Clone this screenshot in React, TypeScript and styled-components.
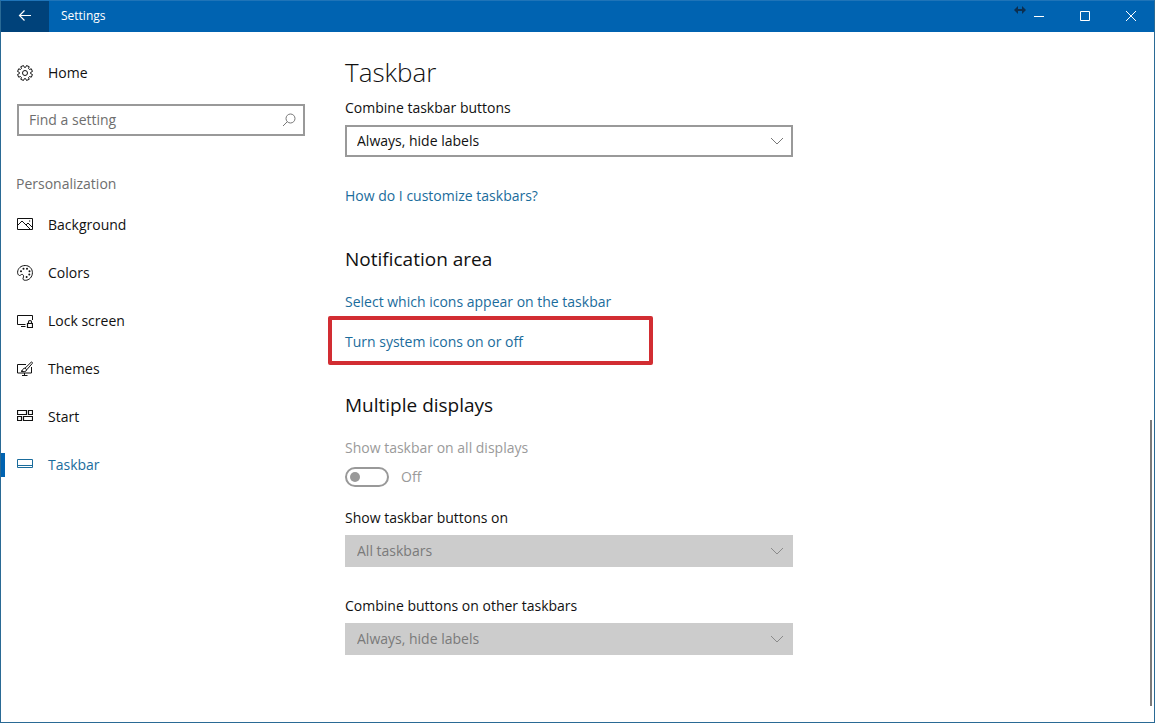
import React from "react";
import styled, { createGlobalStyle, css } from "styled-components";

const accent = "#0063b1";
const linkBlue = "#1a6c9c";

const GlobalStyle = createGlobalStyle`
  *, *::before, *::after { box-sizing: border-box; }
  body {
    margin: 0;
    background: #fff;
    color: #111;
    font-family: "Open Sans", "Noto Sans", sans-serif;
    font-size: 14px;
    line-height: 20px;
  }
  button, input, select { font: inherit; color: inherit; }
  h1, h2, p { margin: 0; font-weight: 400; }
`;

const Window = styled.div`
  display: flex;
  flex-direction: column;
  min-height: 100vh;
  border: 1px solid #2a6a95;
  border-top-color: #1f74b8;
`;

const TitleBar = styled.header`
  position: relative;
  display: flex;
  align-items: stretch;
  height: 31px;
  background: ${accent};
  color: #fff;
`;

const CaptionButton = styled.button`
  display: grid;
  place-items: center;
  width: 46px;
  padding: 0 0 1px;
  border: 0;
  background: transparent;
`;

const BackButton = styled(CaptionButton)`
  width: 48px;
  background: #00427a;
`;

const WindowTitle = styled.p`
  flex: 1;
  padding: 5px 12px;
  font-size: 12px;
`;

const ResizeCursor = styled.svg`
  position: absolute;
  top: 4px;
  right: 128px;
`;

const Body = styled.div`
  display: flex;
  flex: 1;
`;

const Sidebar = styled.nav`
  flex: none;
  width: 304px;
  padding-top: 17px;
`;

const NavItem = styled.a<{ $active?: boolean }>`
  position: relative;
  display: flex;
  align-items: center;
  gap: 15px;
  height: 48px;
  padding-left: 16px;
  color: ${(p) => (p.$active ? linkBlue : "#111")};
  text-decoration: none;
  ${(p) =>
    p.$active &&
    css`
      &::before {
        content: "";
        position: absolute;
        left: 0;
        width: 4px;
        height: 24px;
        background: ${accent};
      }
    `}
`;

const NavGroup = styled.h2`
  margin: 38px 0 7px;
  padding-left: 15px;
  color: #6e6e6e;
  font-size: 14px;
`;

const Field = styled.div`
  display: grid;
  align-items: center;
  & > * { grid-area: 1 / 1; }
  & > svg {
    justify-self: end;
    margin-right: 9px;
    pointer-events: none;
  }
`;

const SearchField = styled(Field)`
  margin: 7px 0 0 16px;
`;

const SearchInput = styled.input`
  width: 100%;
  height: 32px;
  padding: 0 32px 2px 10px;
  border: 2px solid #999;
  background: #fff;
  &::placeholder { color: #6e6e6e; opacity: 1; }
`;

const Main = styled.main`
  flex: 1;
  padding: 20px 40px 40px;
`;

const Title = styled.h1`
  margin-bottom: 6px;
  font-size: 26px;
  font-weight: 300;
  line-height: 40px;
  color: #111;
`;

const Section = styled.section`
  margin-top: 39px;
`;

const SectionTitle = styled.h2`
  margin-bottom: 19px;
  font-size: 19px;
  line-height: 28px;
`;

const Setting = styled.div<{ $gap?: number }>`
  max-width: 448px;
  margin-top: ${(p) => p.$gap ?? 0}px;
`;

const Label = styled.label<{ $muted?: boolean }>`
  display: block;
  margin-bottom: 7px;
  color: ${(p) => (p.$muted ? "#9a9a9a" : "#111")};
`;

const Select = styled.select`
  appearance: none;
  width: 100%;
  height: 32px;
  padding: 0 32px 0 10px;
  border: 2px solid #999;
  border-radius: 0;
  background: #fff;
  color: #111;
  &:disabled {
    border-color: #ccc;
    background: #ccc;
    color: #7a7a7a;
    opacity: 1;
  }
`;

const LinkRow = styled.p<{ $gap?: number }>`
  margin-top: ${(p) => p.$gap ?? 0}px;
`;

const TextLink = styled.a`
  color: ${linkBlue};
  text-decoration: none;
`;

const HighlightedRow = styled(LinkRow)`
  position: relative;
  &::after {
    content: "";
    position: absolute;
    top: -16px;
    left: -17px;
    width: 325px;
    height: 49px;
    border: 4px solid #d22d32;
    border-radius: 2px;
    pointer-events: none;
  }
`;

const ToggleRow = styled.div`
  display: flex;
  align-items: center;
  gap: 12px;
  margin-top: 9px;
  color: #9a9a9a;
`;

const Toggle = styled.input`
  appearance: none;
  display: flex;
  align-items: center;
  width: 44px;
  height: 20px;
  margin: 0;
  padding-left: 3px;
  border: 2px solid #999;
  border-radius: 10px;
  &::before {
    content: "";
    width: 10px;
    height: 10px;
    border-radius: 50%;
    background: #999;
  }
`;

const ScrollTrack = styled.div`
  display: flex;
  flex-direction: column;
  justify-content: flex-end;
  padding: 0 2px 16px 0;
`;

const ScrollThumb = styled.div`
  width: 2px;
  height: 42.5%;
  background: #7a7a7a;
`;

const Icon = ({ children, size = 16 }: { children: React.ReactNode; size?: number }) => (
  <svg width={size} height={size} viewBox={`0 0 ${size} ${size}`} fill="none" stroke="currentColor" aria-hidden="true">
    {children}
  </svg>
);

const gearPath = (() => {
  const points: string[] = [];
  for (let i = 0; i < 8; i++) {
    const corners: [number, number][] = [[-16, 5.7], [-11, 7.6], [11, 7.6], [16, 5.7]];
    for (const [offset, r] of corners) {
      const a = ((i * 45 + 22.5 + offset) * Math.PI) / 180;
      points.push(`${(8 + r * Math.cos(a)).toFixed(2)} ${(8 + r * Math.sin(a)).toFixed(2)}`);
    }
  }
  return `M${points.join("L")}Z`;
})();

const icons = {
  home: (
    <Icon>
      <path d={gearPath} strokeLinejoin="round" />
      <circle cx="8" cy="8" r="2.500" />
    </Icon>
  ),
  background: (
    <Icon>
      <path d="M.5 1.500h15v11H.5z" />
      <path d="M.5 8.500 5 4l8.500 8.500M9 8l2-2 4.500 4.500" />
      <path d="M12 4h1.200" />
    </Icon>
  ),
  colors: (
    <Icon>
      <path d="M.6 7.200C.8 3.300 4 .5 8.200.5c4 0 7.200 3 7.200 7.200 0 4.300-3.200 7.600-7 7.600-2 0-2.900-1-2.200-2.400.6-1.300.5-2.500-.3-3.200-.8-.7-1.600-.2-2.400.5-1.300 1-3-.6-2.900-3Z" />
      <g fill="currentColor" stroke="none">
        <circle cx="4" cy="6.200" r="1" />
        <circle cx="6.500" cy="3.700" r="1" />
        <circle cx="10" cy="3.700" r="1" />
        <circle cx="12.500" cy="6.200" r="1" />
        <circle cx="12.300" cy="9.500" r="1" />
        <circle cx="9.600" cy="12" r="1" />
      </g>
    </Icon>
  ),
  lock: (
    <Icon>
      <path d="M8.500 11.500h-8v-9h15V7M4 13.500h4.500" />
      <path d="M10.500 10.500h5v4h-5zM11.500 10.500V9a1.500 1.500 0 0 1 3 0v1.500" strokeWidth="1.200" />
    </Icon>
  ),
  themes: (
    <Icon>
      <path d="M9 3.500H.5v8.500h14V6M7.500 12v2M5 14.500h5.500" />
      <path d="M14.200 1.200c.6-.5 1.700.4 1.100 1.200L9.800 8.700 8 7.200ZM8 7.200c-1.500 0-2.100.7-2.300 1.700-.2.800-.7 1.200-1.700 1.300 2.700 1 5.500.5 5.800-1.500" />
    </Icon>
  ),
  start: (
    <Icon>
      <path d="M.5 1.500h9v4h-9zM11.500 1.500h4v4h-4zM.5 7.500h4v4h-4zM6.500 7.500h9v4h-9z" strokeWidth="1.200" />
    </Icon>
  ),
  taskbar: (
    <Icon>
      <path d="M.5 2.500h15v8H.5zM.5 8.500h15" />
    </Icon>
  ),
};

const ChevronDown = ({ color = "#777" }: { color?: string }) => (
  <svg width="14" height="8" viewBox="0 0 14 8" fill="none" stroke={color} aria-hidden="true">
    <path d="m1 1 6 6 6-6" />
  </svg>
);

const personalization = [
  { label: "Background", icon: icons.background },
  { label: "Colors", icon: icons.colors },
  { label: "Lock screen", icon: icons.lock },
  { label: "Themes", icon: icons.themes },
  { label: "Start", icon: icons.start },
  { label: "Taskbar", icon: icons.taskbar, active: true },
];

type DropdownProps = { id: string; label: string; value: string; disabled?: boolean; gap?: number };

const Dropdown = ({ id, label, value, disabled, gap }: DropdownProps) => (
  <Setting $gap={gap}>
    <Label htmlFor={id}>{label}</Label>
    <Field>
      <Select id={id} disabled={disabled} defaultValue={value}>
        <option>{value}</option>
      </Select>
      <ChevronDown color={disabled ? "#8a8a8a" : "#777"} />
    </Field>
  </Setting>
);

export default function App() {
  return (
    <>
      <GlobalStyle />
      <Window>
        <TitleBar>
          <BackButton aria-label="Back">
            <Icon>
              <path d="M14 7.500H2.500M7.500 2.500l-5 5 5 5" strokeWidth="1.200" />
            </Icon>
          </BackButton>
          <WindowTitle>Settings</WindowTitle>
          <CaptionButton aria-label="Minimize">
            <Icon size={10}><path d="M0 5.500h10" /></Icon>
          </CaptionButton>
          <CaptionButton aria-label="Maximize">
            <Icon size={10}><path d="M.5.5h9v9h-9z" /></Icon>
          </CaptionButton>
          <CaptionButton aria-label="Close">
            <Icon size={10}><path d="m0 0 10 10M10 0 0 10" /></Icon>
          </CaptionButton>
          <ResizeCursor width="12" height="10" viewBox="0 0 12 10" fill="#0c2f50" aria-hidden="true">
            <path d="M0 5l4-4v3h4V1l4 4-4 4V6H4v3Z" />
          </ResizeCursor>
        </TitleBar>
        <Body>
          <Sidebar aria-label="Settings">
            <NavItem href="#home">{icons.home}Home</NavItem>
            <SearchField>
              <SearchInput type="text" placeholder="Find a setting" aria-label="Find a setting" />
              <svg width="14" height="14" viewBox="0 0 14 14" fill="none" stroke="#777" aria-hidden="true">
                <circle cx="8.500" cy="5.500" r="4.500" />
                <path d="M5.300 8.700 1 13" />
              </svg>
            </SearchField>
            <NavGroup>Personalization</NavGroup>
            {personalization.map((item) => (
              <NavItem
                key={item.label}
                href={`#${item.label.toLowerCase().replace(" ", "-")}`}
                $active={item.active}
                aria-current={item.active ? "page" : undefined}
              >
                {item.icon}
                {item.label}
              </NavItem>
            ))}
          </Sidebar>
          <Main>
            <Title>Taskbar</Title>
            <Dropdown id="combine" label="Combine taskbar buttons" value="Always, hide labels" />
            <LinkRow $gap={29}>
              <TextLink href="#customize">How do I customize taskbars?</TextLink>
            </LinkRow>
            <Section>
              <SectionTitle>Notification area</SectionTitle>
              <LinkRow>
                <TextLink href="#select-icons">Select which icons appear on the taskbar</TextLink>
              </LinkRow>
              <HighlightedRow $gap={20}>
                <TextLink href="#system-icons">Turn system icons on or off</TextLink>
              </HighlightedRow>
            </Section>
            <Section>
              <SectionTitle>Multiple displays</SectionTitle>
              <Label htmlFor="all-displays" $muted>Show taskbar on all displays</Label>
              <ToggleRow>
                <Toggle id="all-displays" type="checkbox" role="switch" disabled />
                <span>Off</span>
              </ToggleRow>
              <Dropdown id="buttons-on" label="Show taskbar buttons on" value="All taskbars" disabled gap={21} />
              <Dropdown id="combine-other" label="Combine buttons on other taskbars" value="Always, hide labels" disabled gap={29} />
            </Section>
          </Main>
          <ScrollTrack aria-hidden="true">
            <ScrollThumb />
          </ScrollTrack>
        </Body>
      </Window>
    </>
  );
}
